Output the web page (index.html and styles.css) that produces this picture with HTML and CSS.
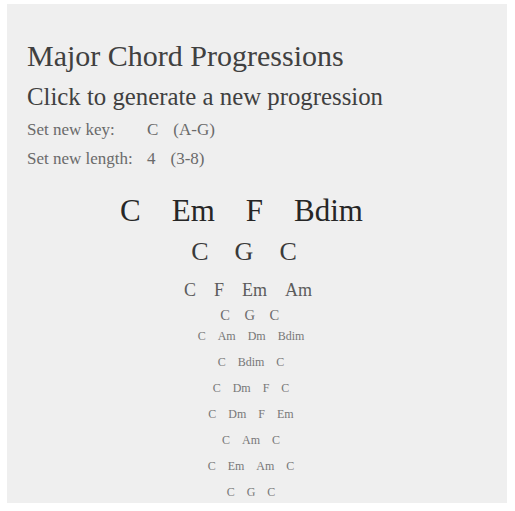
FILE: index.html
```html
<!DOCTYPE html>
<html lang="en">
<head>
    <meta charset="UTF-8">
    <meta name="viewport" content="width=device-width, initial-scale=1.0">
    <title>Major Chord Progressions</title>
    <link rel="stylesheet" href="styles.css">
</head>
<body>
    <div class="app">
        <h1 class="title">Major Chord Progressions</h1>
        <h2 class="subtitle">Click to generate a new progression</h2>
        <div class="setting">
            <span class="setting-label">Set new key:</span>
            <span class="setting-value">C</span>
            <span class="setting-range">(A-G)</span>
        </div>
        <div class="setting">
            <span class="setting-label">Set new length:</span>
            <span class="setting-value">4</span>
            <span class="setting-range">(3-8)</span>
        </div>

        <div class="history">
            <div class="progression p1"><span>C</span><span>Em</span><span>F</span><span>Bdim</span></div>
            <div class="progression p2"><span>C</span><span>G</span><span>C</span></div>
            <div class="progression p3"><span>C</span><span>F</span><span>Em</span><span>Am</span></div>
            <div class="progression p4"><span>C</span><span>G</span><span>C</span></div>
            <div class="progression"><span>C</span><span>Am</span><span>Dm</span><span>Bdim</span></div>
            <div class="progression"><span>C</span><span>Bdim</span><span>C</span></div>
            <div class="progression"><span>C</span><span>Dm</span><span>F</span><span>C</span></div>
            <div class="progression"><span>C</span><span>Dm</span><span>F</span><span>Em</span></div>
            <div class="progression"><span>C</span><span>Am</span><span>C</span></div>
            <div class="progression"><span>C</span><span>Em</span><span>Am</span><span>C</span></div>
            <div class="progression"><span>C</span><span>G</span><span>C</span></div>
        </div>
    </div>
</body>
</html>
```

FILE: styles.css
```css
:root {
    --panel-bg: #efefef;
    --text-dark: #404040;
    --text-muted: #6a6a6a;
}

body {
    margin: 0;
    padding: 0;
    background: #ffffff;
    font-family: 'Liberation Serif', 'Times New Roman', serif;
    color: var(--text-dark);
}

.app {
    box-sizing: border-box;
    margin: 4px 8px 0 7px;
    height: 499px;
    padding: 34px 20px 0 20px;
    background: var(--panel-bg);
    overflow: hidden;
}

.title {
    margin: 0;
    font-size: 30px;
    line-height: 36px;
    font-weight: normal;
}

.subtitle {
    margin: 8px 0 0 0;
    font-size: 24.8px;
    line-height: 30px;
    font-weight: normal;
}

.setting {
    display: flex;
    font-size: 17px;
    line-height: 29px;
    color: var(--text-muted);
}

.subtitle + .setting {
    margin-top: 3px;
}

.setting-label {
    width: 120px;
}

.setting-range {
    margin-left: 15px;
}

/* newest progression on top, older ones shrink and fade */
.history {
    margin-top: 18px;
    text-align: center;
}

.progression {
    font-size: 12px;
    line-height: 26px;
    color: #777777;
}

.progression span {
    margin-right: 1em;
}

.p1 {
    font-size: 31px;
    line-height: 40px;
    color: #262626;
}

.p2 {
    font-size: 26px;
    line-height: 42px;
    color: #3a3a3a;
}

.p3 {
    font-size: 18px;
    line-height: 34px;
    color: #5c5c5c;
}

.p4 {
    font-size: 14.5px;
    line-height: 16px;
    color: #6c6c6c;
}
```
